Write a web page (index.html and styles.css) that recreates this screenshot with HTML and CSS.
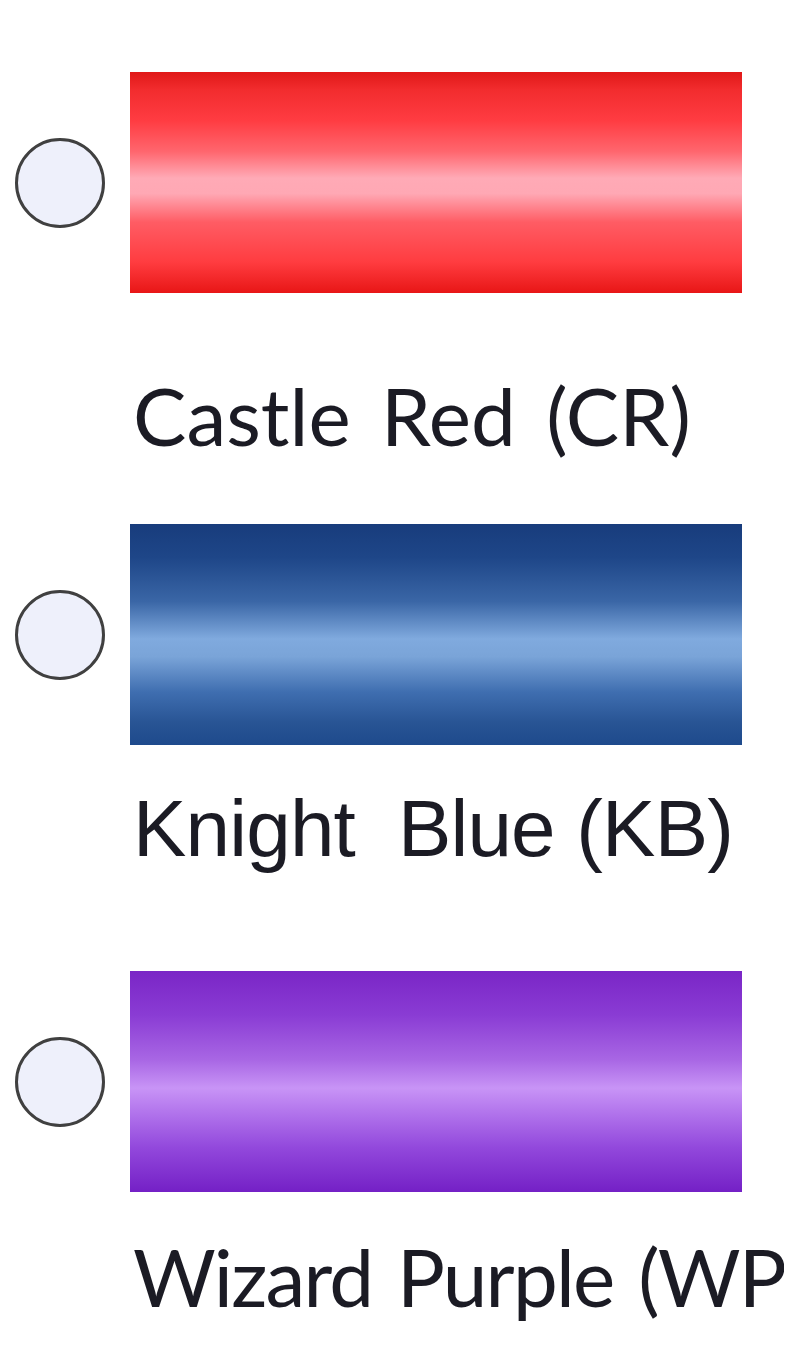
FILE: index.html
```html
<!DOCTYPE html>
<html lang="en">
<head>
    <meta charset="UTF-8">
    <meta name="viewport" content="width=device-width, initial-scale=1.0">
    <title>Choose a colour</title>
    <link rel="stylesheet" href="styles.css">
</head>
<body>
    <ul class="swatch-list">
        <li class="swatch-item item-red">
            <label class="swatch-row">
                <input type="radio" name="colour" value="CR" class="swatch-radio">
                <span class="swatch swatch-red"></span>
            </label>
            <span class="swatch-name">Castle Red (CR)</span>
        </li>
        <li class="swatch-item item-blue">
            <label class="swatch-row">
                <input type="radio" name="colour" value="KB" class="swatch-radio">
                <span class="swatch swatch-blue"></span>
            </label>
            <span class="swatch-name name-plain">Knight&nbsp; Blue (KB)</span>
        </li>
        <li class="swatch-item item-purple">
            <label class="swatch-row">
                <input type="radio" name="colour" value="WP" class="swatch-radio">
                <span class="swatch swatch-purple"></span>
            </label>
            <span class="swatch-name">Wizard Purple (WP)</span>
        </li>
    </ul>
</body>
</html>
```

FILE: styles.css
```css
body {
    margin: 0;
    background: #fff;
    font-family: Lato, "Liberation Sans", sans-serif;
    color: #1b1b24;
}
.swatch-list {
    list-style: none;
    margin: 0;
    padding: 72px 0 0 0;
    width: 784px;
    overflow: hidden;
}
.swatch-row {
    display: flex;
    align-items: center;
    gap: 25px;
    padding-left: 15px;
    cursor: pointer;
}
.swatch-radio {
    appearance: none;
    -webkit-appearance: none;
    width: 90px;
    height: 90px;
    margin: 0;
    border: 3px solid #404040;
    border-radius: 50%;
    background: #eef0fb;
    flex-shrink: 0;
}
.swatch-radio:checked {
    background: radial-gradient(circle, #333 0 22px, #eef0fb 23px);
}
.swatch {
    display: block;
    width: 612px;
    height: 221px;
}
.swatch-red {
    background: linear-gradient(#e01818 0%, #f22c2e 8%, #ff3c42 22%, #ff666e 36%, #ffaab6 48%, #ffa8b4 55%, #ff5c64 68%, #ff3c40 86%, #e81616 100%);
}
.swatch-blue {
    background: linear-gradient(#183c7c 0%, #1e4688 15%, #3a66a6 35%, #80aade 52%, #7aa4d8 60%, #3f6eb0 76%, #285494 90%, #1e4a8c 100%);
}
.swatch-purple {
    background: linear-gradient(#7a26c6 0%, #8a3cd4 20%, #a866e4 40%, #c894f6 53%, #b67aee 62%, #9248dc 80%, #7420c6 100%);
}
.swatch-name {
    display: block;
    margin-left: 133px;
    font-size: 80px;
    line-height: 100px;
    white-space: nowrap;
}
.name-plain {
    font-family: "Liberation Sans", sans-serif;
    letter-spacing: -0.8px;
}
.item-red .swatch-name {
    margin-top: 72px;
    word-spacing: 10px;
}
.item-blue {
    margin-top: 59px;
}
.item-blue .swatch-name,
.item-purple .swatch-name {
    margin-top: 34px;
}
.item-purple {
    margin-top: 92px;
}
.item-purple .swatch-name {
    letter-spacing: -1.8px;
    word-spacing: 6px;
}
```
